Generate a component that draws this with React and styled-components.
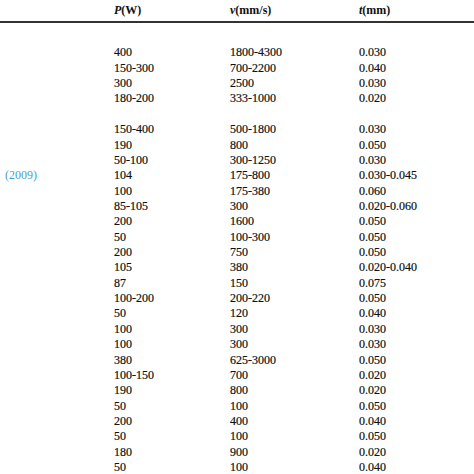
import styled, { createGlobalStyle } from "styled-components";

const GlobalStyle = createGlobalStyle`
  body {
    margin: 0;
    background: #fff;
    font-family: "Liberation Serif", "Times New Roman", serif;
    color: #111;
  }
`;

const Table = styled.div`
  width: 474px;
  height: 474px;
  overflow: hidden;
`;

const HeadRow = styled.div`
  display: grid;
  grid-template-columns: 109px 116px 129px 1fr;
  padding-left: 5px;
  height: 23px;
  align-items: center;
  border-bottom: 2px solid #333;
  font-size: 12px;
  font-weight: bold;
  box-sizing: border-box;
`;

const Body = styled.div`
  padding-top: 7px;
`;

const Row = styled.div`
  display: grid;
  grid-template-columns: 109px 116px 129px 1fr;
  padding-left: 5px;
  height: 15.37px;
  line-height: 15.37px;
  font-size: 12px;
  white-space: nowrap;
  -webkit-text-stroke: 0.2px #111;
`;

const Ref = styled.span`
  color: #4f9bc4;
  -webkit-text-stroke: 0;
`;

const Sym = styled.i`
  font-weight: bold;
`;

const groupA = [
  ["400", "1800-4300", "0.030"],
  ["150-300", "700-2200", "0.040"],
  ["300", "2500", "0.030"],
  ["180-200", "333-1000", "0.020"],
];

const groupB = [
  ["150-400", "500-1800", "0.030"],
  ["190", "800", "0.050"],
  ["50-100", "300-1250", "0.030"],
  ["104", "175-800", "0.030-0.045", "(2009)"],
  ["100", "175-380", "0.060"],
  ["85-105", "300", "0.020-0.060"],
  ["200", "1600", "0.050"],
  ["50", "100-300", "0.050"],
  ["200", "750", "0.050"],
  ["105", "380", "0.020-0.040"],
  ["87", "150", "0.075"],
  ["100-200", "200-220", "0.050"],
  ["50", "120", "0.040"],
  ["100", "300", "0.030"],
  ["100", "300", "0.030"],
  ["380", "625-3000", "0.050"],
  ["100-150", "700", "0.020"],
  ["190", "800", "0.020"],
  ["50", "100", "0.050"],
  ["200", "400", "0.040"],
  ["50", "100", "0.050"],
  ["180", "900", "0.020"],
  ["50", "100", "0.040"],
];

const DataRow = ({ p, v, t, refText }) => (
  <Row>
    <span>{refText && <Ref>{refText}</Ref>}</span>
    <span>{p}</span>
    <span>{v}</span>
    <span>{t}</span>
  </Row>
);

export default function App() {
  return (
    <>
      <GlobalStyle />
      <Table>
        <HeadRow>
          <span />
          <span>
            <Sym>P</Sym>(W)
          </span>
          <span>
            <Sym>v</Sym>(mm/s)
          </span>
          <span>
            <Sym>t</Sym>(mm)
          </span>
        </HeadRow>
        <Body>
          <Row />
          {groupA.map(([p, v, t], i) => (
            <DataRow key={"a" + i} p={p} v={v} t={t} />
          ))}
          <Row />
          {groupB.map(([p, v, t, r], i) => (
            <DataRow key={"b" + i} p={p} v={v} t={t} refText={r} />
          ))}
        </Body>
      </Table>
    </>
  );
}
